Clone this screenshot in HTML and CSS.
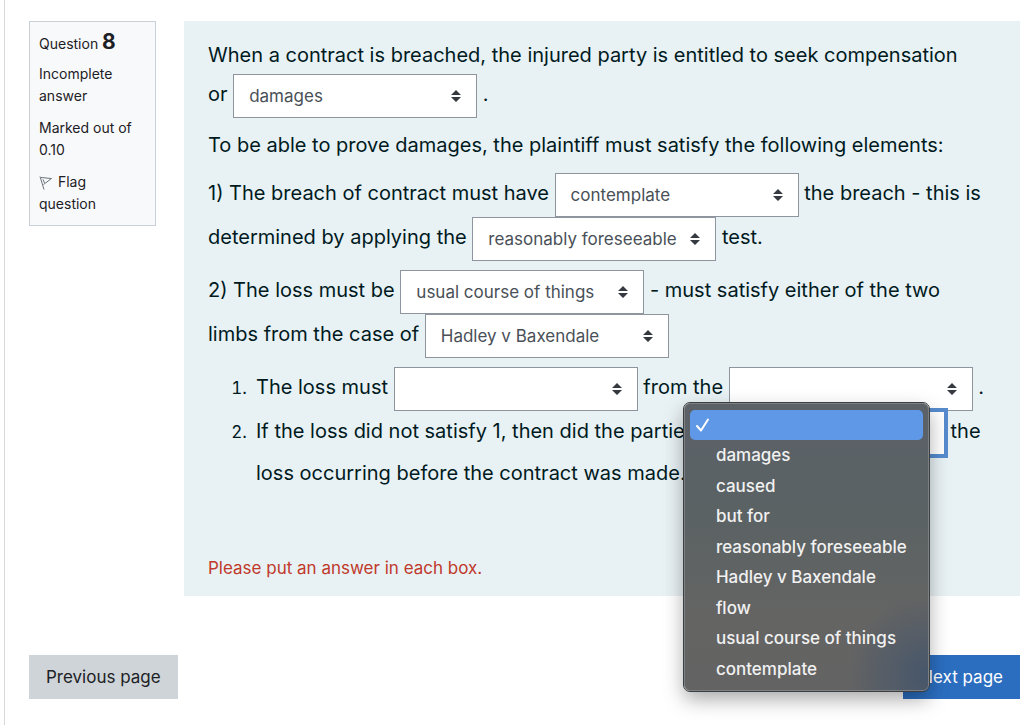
FILE: index.html
```
<!DOCTYPE html>
<html lang="en">
<head>
    <meta charset="UTF-8">
    <meta name="viewport" content="width=device-width, initial-scale=1.0">
    <title>Quiz - Question 8</title>
    <link rel="stylesheet" href="styles.css">
</head>
<body>
    <form class="page">
        <div class="question">
            <div class="info">
                <h3>Question <span class="number">8</span></h3>
                <div>Incomplete answer</div>
                <div>Marked out of 0.10</div>
                <a href="#" class="flag"><svg width="15" height="14" viewBox="0 0 15 14" fill="none" stroke="#6a737b" stroke-width="1"><path d="M1 .5 5 13.5M2 1.5 12.5 2.5 4.5 8.5M4 3.5 5.5 7"/></svg> Flag question</a>
            </div>
            <div class="formulation">
                <p>When a contract is breached, the injured party is entitled to seek compensation
                    <span class="nowrap">or
                    <select aria-label="Blank 1">
                        <option></option>
                        <option selected>damages</option>
                    </select> .</span></p>
                <p>To be able to prove damages, the plaintiff must satisfy the following elements:</p>
                <p>1) The breach of contract must have
                    <select aria-label="Blank 2">
                        <option></option>
                        <option selected>contemplate</option>
                    </select> the breach - this is determined by applying the
                    <select aria-label="Blank 3">
                        <option></option>
                        <option selected>reasonably foreseeable</option>
                    </select> test.</p>
                <p>2) The loss must be
                    <select aria-label="Blank 4">
                        <option></option>
                        <option selected>usual course of things</option>
                    </select> - must satisfy either of the two limbs from the case of
                    <select aria-label="Blank 5">
                        <option></option>
                        <option selected>Hadley v Baxendale</option>
                    </select></p>
                <ol>
                    <li>The loss must
                        <select aria-label="Blank 6">
                            <option></option>
                        </select> from the
                        <select aria-label="Blank 7">
                            <option></option>
                        </select> .</li>
                    <li>If the loss did not satisfy 1, then did the parties
                        <span class="dropdown">
                            <select class="focused" aria-label="Blank 8">
                                <option></option>
                            </select>
                            <ul class="menu" role="listbox" aria-label="Answers">
                                <li class="active" role="option" aria-selected="true"><svg width="16" height="16" viewBox="0 0 16 16" fill="none" stroke="#fff" stroke-width="2" stroke-linecap="round" stroke-linejoin="round"><path d="M2 9 6 13.5 13 2.5"/></svg></li>
                                <li role="option">damages</li>
                                <li role="option">caused</li>
                                <li role="option">but for</li>
                                <li role="option">reasonably foreseeable</li>
                                <li role="option">Hadley v Baxendale</li>
                                <li role="option">flow</li>
                                <li role="option">usual course of things</li>
                                <li role="option">contemplate</li>
                            </ul>
                        </span> the loss occurring before the contract was made.</li>
                </ol>
                <div class="error">Please put an answer in each box.</div>
            </div>
        </div>
        <div class="buttons">
            <button type="button">Previous page</button>
            <button type="button" class="primary">Next page</button>
        </div>
    </form>
</body>
</html>
```

FILE: styles.css
```
* {
    box-sizing: border-box;
}
body {
    font-family: Inter, "Liberation Sans", sans-serif;
    font-size: 17px;
    margin: 0;
    padding-left: 4px;
    color: #1d2125;
    background-color: #fff;
}
.page {
    min-height: 100vh;
    padding: 21px 4px 26px 24px;
    border-left: 1px solid #d5d8db;
}
.question {
    display: flex;
    align-items: flex-start;
    gap: 28px;
}
.info {
    flex: 0 0 127px;
    padding: 11px 9px 10px;
    border: 1px solid #cad0d7;
    background-color: #f8f9fb;
    font-size: 14px;
    line-height: 22px;
}
.info h3 {
    margin: 0;
    font-size: 14px;
    font-weight: 400;
    line-height: 18px;
}
.info .number {
    font-size: 21px;
    font-weight: 700;
}
.info div {
    margin: 10px 0;
}
.flag {
    color: #1d2125;
    text-decoration: none;
}
.flag svg {
    vertical-align: -3px;
}
.formulation {
    flex: 1;
    min-width: 0;
    padding: 16px 32px 15px 24px;
    background-color: #e8f1f4;
    color: #001a1e;
    font-size: 20px;
    line-height: 37px;
}
.formulation p {
    margin: 0 0 9px;
}
.formulation ol {
    margin: 0 0 63px;
    padding-left: 48px;
}
.formulation ol > li::marker {
    content: counter(list-item) ".\00a0\00a0";
    font-size: 17px;
}
.nowrap {
    white-space: nowrap;
}
select {
    width: 244px;
    height: 44px;
    padding: 0 32px 0 15px;
    border: 1px solid #8f959e;
    border-radius: 0;
    appearance: none;
    background: #fff url("data:image/svg+xml,%3Csvg xmlns='http://www.w3.org/2000/svg' width='10' height='12' viewBox='0 0 10 12'%3E%3Cpath fill='%23343a40' d='M0 5h10L5 0zM0 7h10L5 12z'/%3E%3C/svg%3E") no-repeat right 15px center;
    color: #495057;
    font: inherit;
    font-size: 17px;
    vertical-align: middle;
}
.dropdown {
    position: relative;
    display: inline-block;
    height: 44px;
    line-height: 0;
    vertical-align: middle;
}
select.focused {
    border-color: #6ba2e6;
    outline: 4px solid #568bce;
    outline-offset: -1px;
}
/* open list lies over the select */
.menu {
    position: absolute;
    top: -8px;
    left: -17px;
    z-index: 1;
    display: grid;
    grid-auto-rows: 1fr;
    width: 245px;
    height: 288px;
    margin: 0;
    padding: 6px 5px;
    border: 1px solid #7d8183;
    border-radius: 6px;
    outline: 1px solid #3b3f42;
    background: radial-gradient(circle at 100% 95%, #46566b, transparent 80px), linear-gradient(#5c6168, #5a6264 35%, #646463 75%, #636363);
    box-shadow: 0 8px 20px rgba(0, 0, 0, .35);
    color: #f1f1f1;
    font-size: 17px;
    font-weight: 500;
    line-height: 30px;
    list-style: none;
}
.menu li {
    padding-left: 26px;
}
.menu .active {
    display: flex;
    align-items: center;
    padding-left: 5px;
    border-radius: 5px;
    background-color: #5f98e6;
}
.error {
    color: #c0392b;
    font-size: 17px;
    line-height: 26px;
}
.buttons {
    display: flex;
    justify-content: space-between;
    margin-top: 59px;
}
button {
    height: 44px;
    padding: 0 17px;
    border: 0;
    background-color: #ced4d8;
    color: #1d2125;
    font: inherit;
}
button.primary {
    background-color: #2b6ec0;
    color: #fff;
}
```
